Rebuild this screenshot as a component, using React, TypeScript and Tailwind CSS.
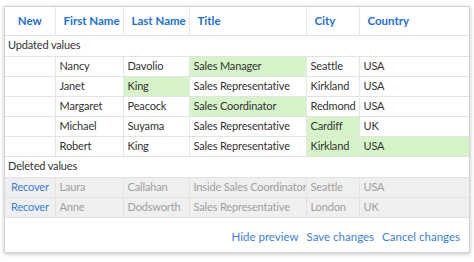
import React from "react";

type Row = {
  first: string;
  last: string;
  title: string;
  city: string;
  country: string;
  changed?: string[];
};

const updated: Row[] = [
  { first: "Nancy", last: "Davolio", title: "Sales Manager", city: "Seattle", country: "USA", changed: ["title"] },
  { first: "Janet", last: "King", title: "Sales Representative", city: "Kirkland", country: "USA", changed: ["last"] },
  { first: "Margaret", last: "Peacock", title: "Sales Coordinator", city: "Redmond", country: "USA", changed: ["title"] },
  { first: "Michael", last: "Suyama", title: "Sales Representative", city: "Cardiff", country: "UK", changed: ["city"] },
  { first: "Robert", last: "King", title: "Sales Representative", city: "Kirkland", country: "USA", changed: ["city", "country"] },
];

const deleted: Row[] = [
  { first: "Laura", last: "Callahan", title: "Inside Sales Coordinator", city: "Seattle", country: "USA" },
  { first: "Anne", last: "Dodsworth", title: "Sales Representative", city: "London", country: "UK" },
];

const fields = ["first", "last", "title", "city", "country"] as const;

export default function App() {
  return (
    <main
      className="h-[262px] w-[474px] bg-white pl-1 pt-[6px] text-[11px] text-[#333]"
      style={{ fontFamily: 'Lato, "Noto Sans", sans-serif' }}
    >
      <div className="w-[466px] border border-[#d4d4d4] bg-white shadow-[0_1px_4px_rgba(0,0,0,0.25)]">
        <table className="w-full table-fixed border-collapse whitespace-nowrap">
          <colgroup>
            <col className="w-[50px]" />
            <col className="w-[68px]" />
            <col className="w-[66px]" />
            <col className="w-[117px]" />
            <col className="w-[53px]" />
            <col />
          </colgroup>
          <thead>
            <tr className="h-[28px] border-b border-[#e2e2e2] text-[11.5px] font-bold text-[#1a6fdf]">
              <th className="border-r border-[#e6e6e6] text-center">New</th>
              <th className="border-r border-[#e6e6e6] pl-[8px] text-left">First Name</th>
              <th className="border-r border-[#e6e6e6] pl-[8px] text-left">Last Name</th>
              <th className="border-r border-[#e6e6e6] pl-[8px] text-left">Title</th>
              <th className="border-r border-[#e6e6e6] pl-[8px] text-left">City</th>
              <th className="pl-[8px] text-left">Country</th>
            </tr>
          </thead>
          <tbody className="tracking-[-0.15px]">
            <tr className="h-[21px] border-b border-[#e2e2e2]">
              <td colSpan={6} className="pl-[3px]">Updated values</td>
            </tr>
            {updated.map((row) => (
              <tr key={row.first} className="h-[20px] border-b border-[#e2e2e2]">
                <td className="border-r border-[#e6e6e6]" />
                {fields.map((f, i) => (
                  <td
                    key={f}
                    className={`overflow-hidden pl-[4px] ${i < 4 ? "border-r border-[#e6e6e6]" : ""} ${
                      row.changed?.includes(f) ? "bg-[#d7f4c9]" : ""
                    }`}
                  >
                    {row[f]}
                  </td>
                ))}
              </tr>
            ))}
            <tr className="h-[21px] border-b border-[#e2e2e2]">
              <td colSpan={6} className="pl-[3px]">Deleted values</td>
            </tr>
            {deleted.map((row) => (
              <tr key={row.first} className="h-[20px] border-b border-[#e2e2e2] bg-[#efefef] text-[#a0a0a0]">
                <td className="border-r border-[#e2e2e2] pl-[6px] text-[#3b7fd9]">Recover</td>
                {fields.map((f, i) => (
                  <td key={f} className={`overflow-hidden pl-[4px] ${i < 4 ? "border-r border-[#e2e2e2]" : ""}`}>
                    {row[f]}
                  </td>
                ))}
              </tr>
            ))}
          </tbody>
        </table>
        <div className="flex h-[34px] items-center justify-end gap-[8px] pt-[4px] pr-[9px] text-[11.5px] text-[#3b7fd9]">
          <span>Hide preview</span>
          <span>Save changes</span>
          <span>Cancel changes</span>
        </div>
      </div>
    </main>
  );
}
